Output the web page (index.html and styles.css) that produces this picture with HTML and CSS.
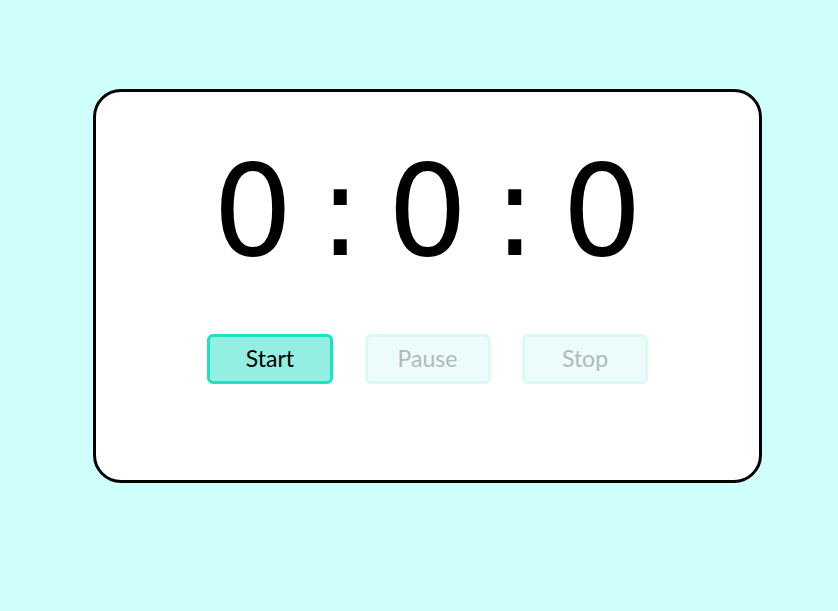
FILE: index.html
```html
<!DOCTYPE html>
<html>
<head>
<meta charset="utf-8">
<link rel="stylesheet" href="styles.css">
</head>
<body>
<div class="card">
  <div class="clock">
    <span class="num">0</span><span class="sep">:</span><span class="num">0</span><span class="sep">:</span><span class="num">0</span>
  </div>
  <div class="controls">
    <button class="btn start">Start</button>
    <button class="btn off" disabled>Pause</button>
    <button class="btn off" disabled>Stop</button>
  </div>
</div>
</body>
</html>
```
FILE: styles.css
```css
html, body {
  margin: 0;
  padding: 0;
  background: #cffffa;
}
.card {
  box-sizing: border-box;
  width: 669px;
  height: 394px;
  margin: 89px 0 0 93px;
  background: #ffffff;
  border: 3px solid #000000;
  border-radius: 28px;
  display: flex;
  flex-direction: column;
  align-items: center;
  padding-top: 56px;
}
.clock {
  display: flex;
  gap: 26px;
  font-family: "DejaVu Sans", sans-serif;
  font-size: 126px;
  line-height: 128px;
  color: #000;
}
.controls {
  display: flex;
  gap: 31.5px;
  margin-top: 58px;
}
.btn {
  box-sizing: border-box;
  width: 126px;
  height: 50px;
  border-radius: 6px;
  font-family: Lato, sans-serif;
  font-size: 23px;
  padding: 0 0 2px;
}
.start {
  background: #92efe1;
  border: 3px solid #1de0c4;
  color: #000;
}
.off {
  background: #ebfcfa;
  border: 3px solid #d9faf5;
  color: #afbbb9;
}
```
